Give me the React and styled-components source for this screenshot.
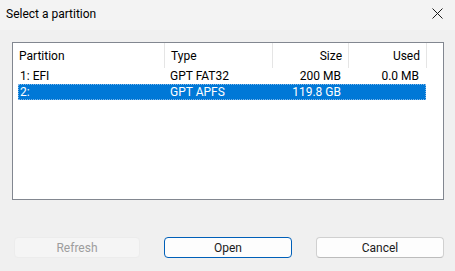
import React from "react";
import styled, { createGlobalStyle } from "styled-components";

const Global = createGlobalStyle`
  html, body { margin: 0; padding: 0; background: #f0f0f0; }
  body { font-family: Roboto, "Segoe UI", sans-serif; font-size: 12px; color: #000; }
`;

const Window = styled.div`
  width: 455px;
  height: 271px;
  background: #f0f0f0;
  display: flex;
  flex-direction: column;
  overflow: hidden;
`;

const TitleBar = styled.div`
  height: 30px;
  flex: none;
  background: #f3f3f3;
  display: flex;
  align-items: flex-start;
  justify-content: space-between;
  padding: 6px 12px 0 6px;
  box-sizing: border-box;
`;

const Title = styled.span`
  font-size: 12px;
  line-height: 16px;
  color: #000;
`;

const CloseBtn = styled.span`
  display: flex;
  margin-top: 2px;
`;

const Body = styled.div`
  padding: 12px 11px 0 12px;
  display: flex;
  flex-direction: column;
`;

const ListBox = styled.div`
  height: 158px;
  box-sizing: border-box;
  border: 1px solid #828790;
  background: #fff;
  display: flex;
  flex-direction: column;
  align-items: flex-start;
`;

const Header = styled.div`
  display: grid;
  grid-template-columns: 152px 108px 76px 78px;
  height: 25px;
`;

const HeadCell = styled.div`
  display: flex;
  align-items: center;
  justify-content: ${(p) => (p.$right ? "flex-end" : "flex-start")};
  padding: 0 ${(p) => (p.$right ? "6px" : "0")} 0 6px;
  border-right: 1px solid #e5e5e5;
  line-height: 16px;
  color: #000;
`;

const Row = styled.div`
  display: grid;
  grid-template-columns: 146px 108px 76px 78px;
  margin-left: 5px;
  height: 16px;
  box-sizing: border-box;
  background: ${(p) => (p.$selected ? "#0078d7" : "transparent")};
  color: ${(p) => (p.$selected ? "#fff" : "#000")};
  outline: ${(p) => (p.$selected ? "1px dotted #7fb6e8" : "none")};
  outline-offset: -1px;
`;

const Cell = styled.div`
  display: flex;
  align-items: center;
  justify-content: ${(p) => (p.$right ? "flex-end" : "flex-start")};
  padding: 1px ${(p) => (p.$right ? "7px" : "0")} 0 ${(p) => (p.$first ? "2px" : "6px")};
  line-height: 15px;
  white-space: nowrap;
`;

const Footer = styled.div`
  display: flex;
  gap: 24px;
  padding: 37px 0 0 2px;
`;

const Button = styled.button`
  width: ${(p) => p.$w}px;
  height: 21px;
  box-sizing: border-box;
  font-family: inherit;
  font-size: 12px;
  line-height: 16px;
  padding: 0;
  border-radius: 4px;
  background: ${(p) => (p.$disabled ? "#f5f5f5" : "#fdfdfd")};
  color: ${(p) => (p.$disabled ? "#9d9d9d" : "#1b1b1b")};
  border: ${(p) =>
    p.$primary ? "1.5px solid #005fb8" : p.$disabled ? "1px solid #ececec" : "1px solid #d0d0d0"};
  border-bottom-color: ${(p) => (p.$primary ? "#005fb8" : p.$disabled ? "#ececec" : "#bcbcbc")};
`;

const rows = [
  ["1: EFI", "GPT FAT32", "200 MB", "0.0 MB"],
  ["2:", "GPT APFS", "119.8 GB", ""],
];

export default function App() {
  return (
    <Window>
      <Global />
      <TitleBar>
        <Title>Select a partition</Title>
        <CloseBtn>
          <svg width="11" height="11" viewBox="0 0 11 11">
            <path d="M0.5 0.5L10.5 10.5M10.5 0.5L0.5 10.5" stroke="#1a1a1a" strokeWidth="1" fill="none" />
          </svg>
        </CloseBtn>
      </TitleBar>
      <Body>
        <ListBox>
          <Header>
            <HeadCell>Partition</HeadCell>
            <HeadCell>Type</HeadCell>
            <HeadCell $right>Size</HeadCell>
            <HeadCell $right>Used</HeadCell>
          </Header>
          {rows.map((r, i) => (
            <Row key={i} $selected={i === 1}>
              <Cell $first>{r[0]}</Cell>
              <Cell>{r[1]}</Cell>
              <Cell $right>{r[2]}</Cell>
              <Cell $right>{r[3]}</Cell>
            </Row>
          ))}
        </ListBox>
        <Footer>
          <Button $w={126} $disabled disabled>Refresh</Button>
          <Button $w={128} $primary>Open</Button>
          <Button $w={128}>Cancel</Button>
        </Footer>
      </Body>
    </Window>
  );
}
